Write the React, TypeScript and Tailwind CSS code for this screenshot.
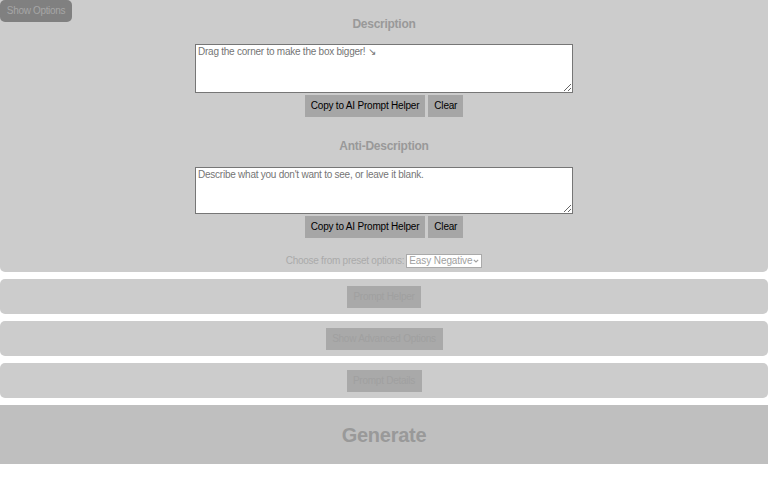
import React from "react";

const font = { fontFamily: '"Liberation Sans", Arial, sans-serif' };

function Helpers() {
  return (
    <div className="flex justify-center gap-[3px] mt-[2px]">
      <button className="h-[22px] px-[6px] bg-[#a6a6a6] text-black text-[10px] tracking-[-0.2px] leading-none">
        Copy to AI Prompt Helper
      </button>
      <button className="h-[22px] px-[6px] bg-[#a6a6a6] text-black text-[10px] tracking-[-0.2px] leading-none">
        Clear
      </button>
    </div>
  );
}

function FadedPanel({ label, w }: { label: string; w: string }) {
  return (
    <div className="bg-[#cccccc] rounded-[5px] h-[35px] flex items-center justify-center">
      <button className={`h-[22px] ${w} bg-[#a9a9a9] text-[#a0a0a0] text-[10px] tracking-[-0.25px] leading-none`}>
        {label}
      </button>
    </div>
  );
}

export default function App() {
  return (
    <div className="relative w-[768px] h-[480px] bg-white overflow-hidden tracking-[-0.25px]" style={font}>
      <div className="flex flex-col gap-[7px]">
        <div className="bg-[#cccccc] rounded-b-[5px] h-[272px] flex flex-col items-center">
          <div className="mt-[17px] h-[14px] text-[12px] font-bold text-[#999999] leading-[14px] tracking-[-0.27px]">
            Description
          </div>
          <textarea
            className="mt-[13px] w-[378px] h-[49px] bg-white border border-[#767676] text-[10px] tracking-[-0.24px] leading-[12px] px-[2px] py-[1px] resize text-[#757575] placeholder:text-[#757575] block"
            placeholder="Drag the corner to make the box bigger! ↘"
          />
          <Helpers />
          <div className="mt-[22px] h-[14px] text-[12px] font-bold text-[#999999] leading-[14px] tracking-[-0.25px]">
            Anti-Description
          </div>
          <textarea
            className="mt-[14px] w-[378px] h-[47px] bg-white border border-[#767676] text-[10px] tracking-[-0.24px] leading-[12px] px-[2px] py-[1px] resize text-[#757575] placeholder:text-[#757575] block"
            placeholder="Describe what you don't want to see, or leave it blank."
          />
          <Helpers />
          <div className="mt-[15px] flex items-center gap-[2px] text-[10px] tracking-[-0.26px] text-[#aaaaaa]">
            <span>Choose from preset options:</span>
            <div className="flex items-center h-[14px] w-[76px] bg-white border border-[#aaaaaa]">
              <select className="appearance-none h-full flex-1 min-w-0 pl-[2px] pr-0 bg-transparent text-[10px] tracking-[-0.1px] text-[#a0a0a0] leading-none outline-none">
                <option>Easy Negative</option>
              </select>
              <svg width="6" height="4" viewBox="0 0 6 4" className="mr-[2px] shrink-0">
                <path d="M0.8 0.8 L3 3 L5.2 0.8" fill="none" stroke="#a0a0a0" strokeWidth="1.1" />
              </svg>
            </div>
          </div>
        </div>
        <FadedPanel label="Prompt Helper" w="w-[74px]" />
        <FadedPanel label="Show Advanced Options" w="w-[117px]" />
        <FadedPanel label="Prompt Details" w="w-[75px]" />
        <div className="bg-[#bfbfbf] h-[59px] flex items-center justify-center text-[20px] font-bold text-[#999999] tracking-[-0.25px]">
          Generate
        </div>
      </div>
      <button className="absolute left-0 top-0 h-[22px] w-[72px] rounded-[5px] bg-[#808080] text-[#a6a6a6] text-[10px] tracking-[-0.33px] leading-none">
        Show Options
      </button>
    </div>
  );
}
